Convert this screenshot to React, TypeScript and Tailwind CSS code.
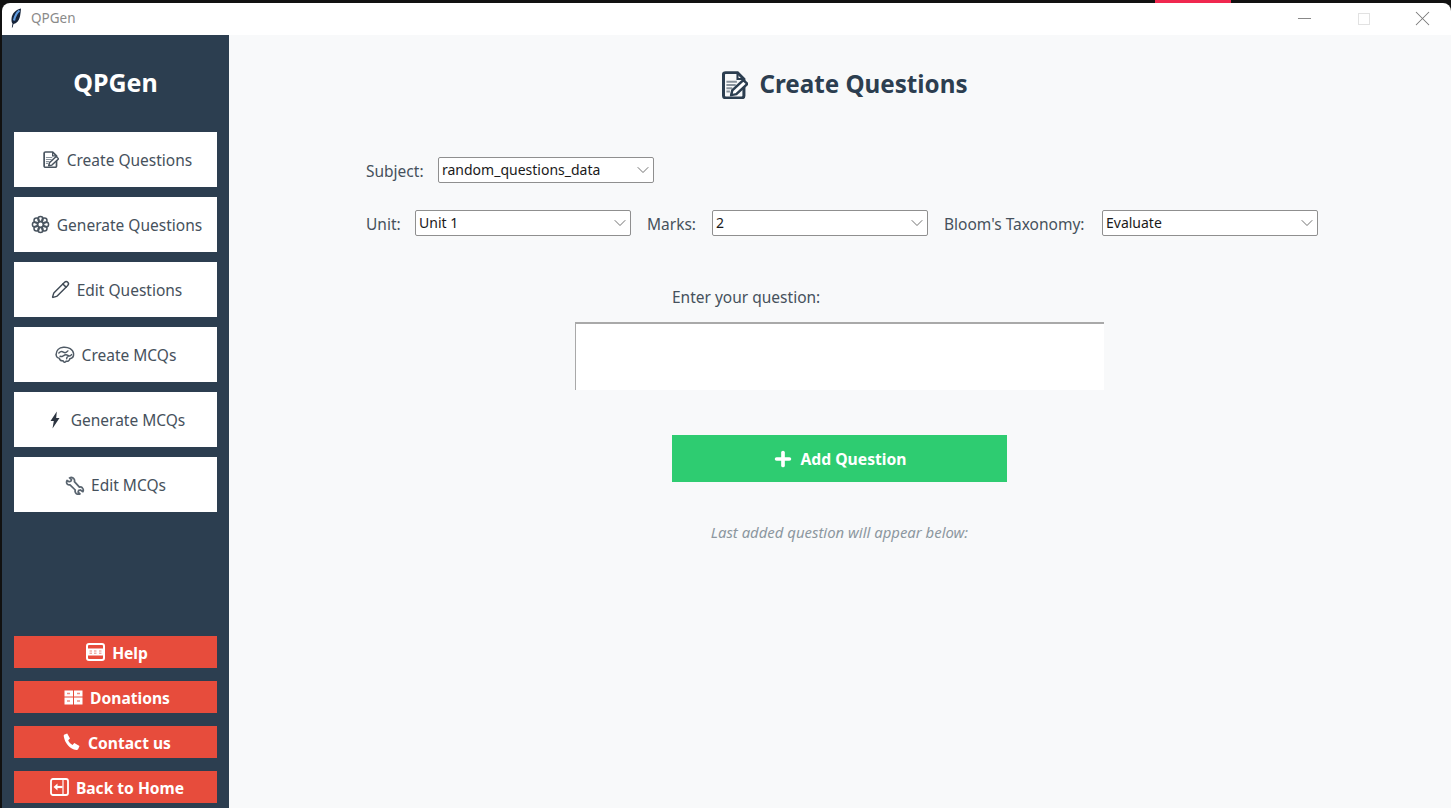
import React from "react";
import { ChevronDown, Pencil, Plus, X, Minus } from "lucide-react";

const FileIcon = ({ size = 18, color = "#4a5560", stroke = 2.4 }: { size?: number; color?: string; stroke?: number }) => (
  <svg width={size} height={size} viewBox="0 0 24 26" preserveAspectRatio="none" fill="none" className="shrink-0">
    <path d="M3 3C3 2 3.900 1.500 5 1.500h10l5.500 6V23c0 1.100-.9 2-2 2H5c-1.100 0-2-.9-2-2V3Z" stroke={color} strokeWidth={stroke} />
    <path d="M15 1.500v6h5.500" stroke={color} strokeWidth="1.800" />
    <path d="M5.500 10h9M5.500 13h8M5.500 16h5M5.500 19h3" stroke="#8a949d" strokeWidth="1.700" />
    <path d="M9.500 22.500l1-4.500L20 8.500l3.500 3.500-9.500 9.500-4.500 1Z" fill="#fff" stroke={color} strokeWidth="2.100" strokeLinejoin="round" />
  </svg>
);

const GearIcon = () => (
  <svg width="19" height="19" viewBox="0 0 24 24" fill="none" stroke="#4a5560" strokeWidth="1.900" className="shrink-0">
    <circle cx="12" cy="5" r="3.200" />
    <circle cx="12" cy="19" r="3.200" />
    <circle cx="5" cy="12" r="3.200" />
    <circle cx="19" cy="12" r="3.200" />
    <circle cx="7" cy="7" r="3.200" />
    <circle cx="17" cy="7" r="3.200" />
    <circle cx="7" cy="17" r="3.200" />
    <circle cx="17" cy="17" r="3.200" />
    <circle cx="12" cy="12" r="3.500" fill="#fff" />
  </svg>
);

const BrainIcon = () => (
  <svg width="20" height="18" viewBox="0 0 24 22" fill="none" stroke="#4f5a65" strokeWidth="1.800" strokeLinecap="round" className="shrink-0">
    <path d="M5 15c-2.500-.5-4-2.500-3.800-5C1.400 6 4.500 2 10 1.500c6-.5 12 2.500 12.500 8 .2 3-1.500 5.500-4.500 6-.5 2.500-2.500 3.500-4.500 3-1 2-3.500 1.500-4-.5-2 .3-4-1-4.500-3Z" />
    <path d="M4.500 8.500c2-2 4-2 5.500-1 1.500 1 4 .5 5.500-1.500M10 12c2-1.500 4-1.500 5.500-.5s3.500.5 4.500-1M6 12.500c1 .5 2 .5 3 0M14 15.500c0-1 .5-2 1.500-2.500" />
  </svg>
);

const BoltIcon = () => (
  <svg width="12" height="18" viewBox="0 0 12 18" fill="#2c3440" className="shrink-0">
    <path d="M7.800 0.500 1.500 10h3.300L3.500 17.500 10.500 7H7.200L7.800 .5Z" />
  </svg>
);

const WrenchIcon = () => (
  <svg width="20" height="20" viewBox="0 0 24 24" fill="#fff" stroke="#5a6570" strokeWidth="2.100" strokeLinejoin="round" className="shrink-0">
    <path d="M2.500 6.500 5 8l2-.5L7.800 5.500 5.500 3.500c2-1 4.500-.5 5.500 1.500.6 1.100.6 2 .3 3l6 6.500c1.200-.3 2.400-.1 3.400.8 1.300 1.300 1.500 3.200.8 4.700L18.500 18l-2 .5-.8 2 2.200 2.200c-2 .8-4 .2-5.200-1.500-.7-1.100-.8-2.200-.4-3.200L6 11.800c-1.200.3-2.300.1-3.200-.8-1-1.200-1.100-3-.3-4.500Z" />
  </svg>
);

const SosIcon = () => (
  <svg width="19" height="18" viewBox="0 0 19 18" fill="none" className="shrink-0">
    <rect x="1" y="1" width="17" height="16" rx="2" stroke="#fff" strokeWidth="2" />
    <rect x="1" y="5.500" width="17" height="7" fill="#fff" />
    <path d="M3.500 8h2.500M8 8h2.500M13 8h2.500M3.500 10.200h2.500M8 10.200h2.500M13 10.200h2.500" stroke="#e9897d" strokeWidth="1" />
  </svg>
);

const GiftIcon = () => (
  <svg width="19" height="15" viewBox="0 0 19 15" className="shrink-0">
    <rect x="0.500" y="0.500" width="18" height="14" fill="#fff" />
    <path d="M9.500 0v15M0 7h19" stroke="#e74c3c" strokeWidth="1" />
    <path d="M3 3.500h3M13 3.500h3M3 11h3M13 11h3" stroke="#ee8d82" strokeWidth="1.400" />
  </svg>
);

const PhoneIcon = () => (
  <svg width="18" height="18" viewBox="0 0 18 18" fill="#fff" className="shrink-0">
    <path d="M1 1.800 4.200.6 7 5.500 5.200 7.200c.8 2 2.300 3.600 4.300 4.700l1.800-1.800 5.200 3-1.400 3.200c-.4.600-1 .9-1.800.8C7 16 2 10.500.8 3.500.7 2.800.7 2.300 1 1.800Z" />
  </svg>
);

const BackIcon = () => (
  <svg width="19" height="18" viewBox="0 0 19 18" fill="none" className="shrink-0">
    <rect x="1" y="1" width="17" height="16" rx="2" stroke="#fff" strokeWidth="1.800" />
    <path d="M13 1v16" stroke="#fff" strokeWidth="1.200" />
    <path d="M12.500 9H6" stroke="#fff" strokeWidth="2.200" />
    <path d="M3.500 9 7.500 5.500v7L3.500 9Z" fill="#fff" />
  </svg>
);

const Feather = () => (
  <svg width="12" height="20" viewBox="0 0 12 20" className="shrink-0">
    <path d="M11 .5C6 1.500 2 5 1.500 11c-.1 2 .2 3.500 1 4.500L1.800 19.500h.8L3.500 16c3-.5 5.500-3 6.500-7.500.5-2.500.8-5.500 1-8Z" fill="#16243a" />
    <path d="M9.500 2.500C7 4.500 5 7.500 4 12.500" stroke="#5f9be0" strokeWidth="2.200" fill="none" />
  </svg>
);

const navItems: { label: string; icon: React.ReactNode; cls: string }[] = [
  { label: "Create Questions", icon: <FileIcon size={17} />, cls: "gap-[8px] pl-[3px]" },
  { label: "Generate Questions", icon: <GearIcon />, cls: "gap-[7px] pl-[2px]" },
  { label: "Edit Questions", icon: <Pencil size={19} strokeWidth={1.800} color="#3f4a55" className="shrink-0" />, cls: "gap-[7px] pl-[2px]" },
  { label: "Create MCQs", icon: <BrainIcon />, cls: "gap-[7px]" },
  { label: "Generate MCQs", icon: <BoltIcon />, cls: "gap-[10px] pl-[3px]" },
  { label: "Edit MCQs", icon: <WrenchIcon />, cls: "gap-[6px]" },
];

const footItems: { label: string; icon: React.ReactNode }[] = [
  { label: "Help", icon: <SosIcon /> },
  { label: "Donations", icon: <GiftIcon /> },
  { label: "Contact us", icon: <PhoneIcon /> },
  { label: "Back to Home", icon: <BackIcon /> },
];

const Select = ({ value, width }: { value: string; width: string }) => (
  <div className={`${width} h-[26px] shrink-0 flex items-center justify-between pl-[3px] bg-white border border-[#8f8f8f] rounded-[2px] text-[14px] text-[#1a1a1a]`}>
    <span className="-mt-[1px]">{value}</span>
    <ChevronDown size={20} strokeWidth={1} color="#555" />
  </div>
);

const Label = ({ children, className = "" }: { children: React.ReactNode; className?: string }) => (
  <span className={`h-[26px] leading-[28px] text-[15.500px] text-[#46515c] whitespace-nowrap ${className}`}>{children}</span>
);

export default function App() {
  return (
    <div
      className="w-[1451px] h-[808px] overflow-hidden bg-[#111111] pt-[3px] pl-[2px]"
      style={{ fontFamily: '"Noto Sans", "Open Sans", sans-serif' }}
    >
      <div className="relative">
        <div className="absolute -top-[3px] left-[1153px] w-[76px] h-[3px] bg-[#f0284f]" />
      </div>
      <div className="w-[1449px] h-[805px] flex flex-col rounded-t-[8px] overflow-hidden">
        <header className="h-[32px] shrink-0 bg-white flex items-center">
          <div className="w-[27px] flex justify-center pl-[1px] -mt-[3px]">
            <Feather />
          </div>
          <span className="text-[13.500px] text-[#8a8a8a] ml-[2px] -mt-[1px]">QPGen</span>
          <div className="ml-auto flex items-center text-[#777] -mt-[1px]">
            <div className="w-[59px] flex justify-center"><Minus size={21} strokeWidth={1} /></div>
            <div className="w-[59px] flex justify-center">
              <div className="w-[12px] h-[12px] border border-[#e2e2e2]" />
            </div>
            <div className="w-[59px] flex justify-center -mr-[1px]"><X size={25} strokeWidth={1} /></div>
          </div>
        </header>
        <div className="flex-1 flex min-h-0">
          <aside className="w-[227px] shrink-0 bg-[#2c3e50] flex flex-col pl-[12px] pr-[12px] pb-[5px]">
            <div className="h-[97px] shrink-0 flex items-center justify-center pb-[2px] text-[25px] font-bold text-white">
              QPGen
            </div>
            <nav className="flex flex-col gap-[10px]">
              {navItems.map((n) => (
                <div
                  key={n.label}
                  className={`h-[55px] bg-white flex items-center justify-center text-[15.500px] text-[#46515c] ${n.cls}`}
                >
                  {n.icon}
                  <span className="pt-[3px]">{n.label}</span>
                </div>
              ))}
            </nav>
            <div className="mt-auto flex flex-col gap-[13px]">
              {footItems.map((f) => (
                <div
                  key={f.label}
                  className="h-[32px] bg-[#e74c3c] flex items-center justify-center gap-[7px] pl-[3px] text-[15.600px] font-bold text-white"
                >
                  {f.icon}
                  <span className="pt-[3px]">{f.label}</span>
                </div>
              ))}
            </div>
          </aside>
          <main className="flex-1 bg-[#f8f9fa] flex flex-col">
            <h1 className="h-[98px] shrink-0 flex items-center justify-center gap-[11px] pl-[8px] pt-[1px] text-[24.200px] font-bold text-[#2c3e50]">
              <FileIcon size={28} color="#2c3e50" stroke={2.6} />
              <span>Create Questions</span>
            </h1>
            <div className="flex items-start mt-[24px] pl-[137px]">
              <Label className="w-[72px]">Subject:</Label>
              <Select value="random_questions_data" width="w-[216px]" />
            </div>
            <div className="flex items-start mt-[27px] pl-[137px]">
              <Label className="w-[49px]">Unit:</Label>
              <Select value="Unit 1" width="w-[216px]" />
              <Label className="ml-[16px] w-[65px]">Marks:</Label>
              <Select value="2" width="w-[216px]" />
              <Label className="ml-[16px] w-[158px]">Bloom's Taxonomy:</Label>
              <Select value="Evaluate" width="w-[216px]" />
            </div>
            <div className="mt-[47px] pl-[443px] h-[26px] flex items-center">
              <Label>Enter your question:</Label>
            </div>
            <div className="mt-[13px] ml-[346px] w-[529px] h-[68px] bg-white border-t-[2px] border-l-[1px] border-[#a9a9a9]" />
            <div className="mt-[45px] ml-[443px] w-[335px] h-[47px] bg-[#2ecc71] flex items-center justify-center gap-[6px] text-[15.700px] font-bold text-white">
              <Plus size={22} strokeWidth={4} />
              <span className="pt-[2px]">Add Question</span>
            </div>
            <div className="mt-[39px] text-center text-[14.900px] italic text-[#8c979f] pr-[1px]">
              Last added question will appear below:
            </div>
          </main>
        </div>
      </div>
    </div>
  );
}
